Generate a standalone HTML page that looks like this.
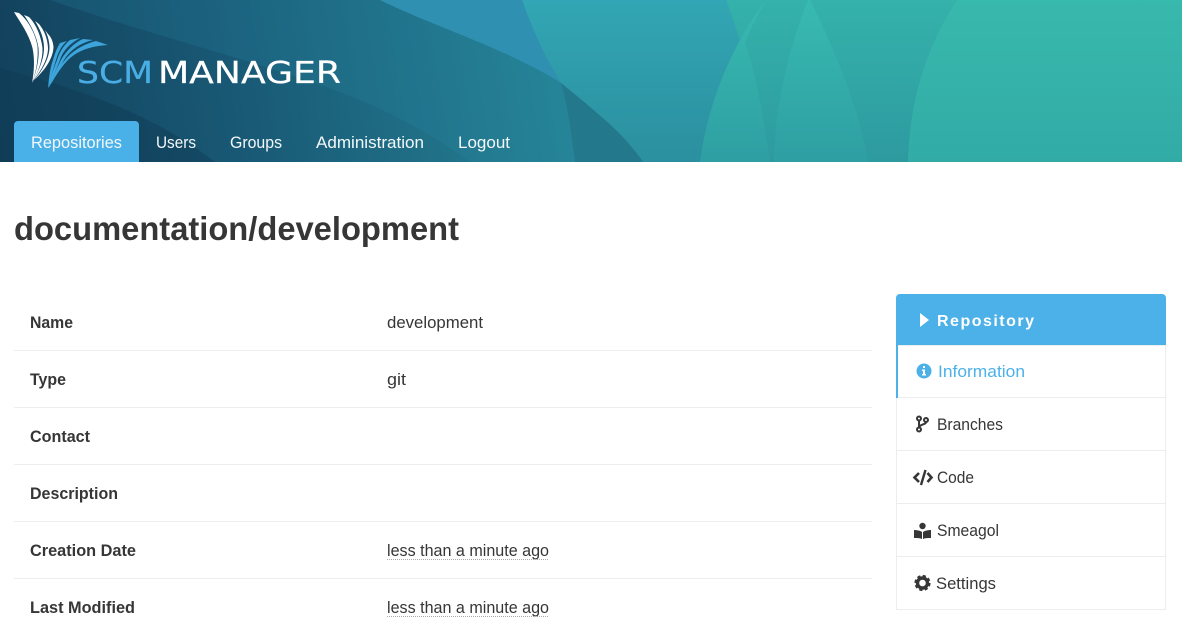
<!DOCTYPE html>
<html><head><meta charset="utf-8"><title>SCM Manager</title>
<style>
html,body{margin:0;padding:0;background:#fff;width:1182px;height:641px;overflow:hidden}
svg{display:block}
text{font-family:"Liberation Sans",sans-serif;font-size:17px;fill:#363636}
.b{font-weight:bold}
.n{fill:#f3f8fa}
</style></head><body>
<svg width="1182" height="641" viewBox="0 0 1182 641" xmlns="http://www.w3.org/2000/svg">
<defs>
<linearGradient id="g" gradientUnits="userSpaceOnUse" x1="0" y1="162" x2="1000" y2="0">
<stop offset="0" stop-color="#12405b"/><stop offset=".25" stop-color="#195a76"/><stop offset=".5" stop-color="#237a8e"/><stop offset=".7" stop-color="#2d9aa3"/><stop offset="1" stop-color="#36b5a8"/>
</linearGradient>
<linearGradient id="v1" x1="0" y1="0" x2="0" y2="1"><stop offset="0" stop-color="#38bab0"/><stop offset="1" stop-color="#2e9fa3"/></linearGradient>
<linearGradient id="v2" x1="0" y1="0" x2="0" y2="1"><stop offset="0" stop-color="#35b2ab"/><stop offset="1" stop-color="#2d9aa0"/></linearGradient>
<linearGradient id="v3" x1="0" y1="0" x2="0" y2="1"><stop offset="0" stop-color="#38b9ad"/><stop offset="1" stop-color="#32aba6"/></linearGradient>
<linearGradient id="v4" x1="0" y1="0" x2="0" y2="1"><stop offset="0" stop-color="#32a6b4"/><stop offset="1" stop-color="#2b8f9f"/></linearGradient>
</defs>
<rect width="1182" height="162" fill="url(#g)"/>
<path d="M0 68C80 90 150 112 215 162H0Z" fill="#103850" opacity=".4"/>
<path d="M50 0C150 35 260 62 340 92C400 115 440 140 470 162H575C572 140 568 105 561 83C510 50 430 25 380 0Z" fill="#2a8cab" opacity=".2"/>
<path d="M380 0H522C534 35 548 62 561 83C510 50 430 25 380 0Z" fill="#2f90b2"/>
<path d="M522 0H726C745 50 760 110 770 162H643C625 135 600 115 561 83C548 62 534 35 522 0Z" fill="url(#v4)"/>
<path d="M561 83C600 115 625 135 643 162H575C572 140 568 105 561 83Z" fill="#24788c"/>
<path d="M726 0H808C790 45 775 100 774 162H770C760 110 745 50 726 0Z" fill="url(#v2)"/>
<path d="M766 0C735 40 708 100 700 162H770C762 105 752 60 745 43C752 25 760 10 766 0Z" fill="url(#v1)"/>
<path d="M810 0H957C925 50 910 100 908 162H868C860 115 840 60 810 0Z" fill="url(#v2)"/>
<path d="M808 0H810C840 60 860 115 868 162H774C775 100 790 45 808 0Z" fill="url(#v1)"/>
<path d="M957 0H1182V162H908C910 100 925 50 957 0Z" fill="url(#v3)"/>

<!-- logo -->
<g fill="#fff">
<path d="M14 12L19 13C27 19 35 32 37.500 46C38.500 60 36 72 32 83C34 72 35 60 32.500 48C29 34 20 22 14 12Z"/>
<path d="M24 15L29 17C36 24 41 36 42.500 48C43 60 38 72 32.500 82C36 72 39.500 60 38.500 48C37 37 31 25 24 15Z"/>
<path d="M35 21L39 24C44 30 47.500 38 48 48C48 60 40 72 33 81C38 72 44 60 44 48C44 38 40 29 35 21Z"/>
<path d="M45 30L48 34C51 37 53 41 53.500 47C53 60 43 72 34 80C41 72 49 60 49.500 48C49.500 42 48 36 45 30Z"/>
</g>
<g fill="#3da5dc">
<path d="M60 43L67 41C61 46 58 53 56 60C53 70 50 80 48 88C49 78 50 68 53 60C55 53 57 48 60 43Z"/>
<path d="M70 40L80 38C71 43 63 50 60 60C56 70 52 80 48 88C50 78 54 68 57 60C60 51 64 45 70 40Z"/>
<path d="M83 39L93 40C80 43 70 50 64 60C58 70 53 80 48.500 88C52 78 57 68 61 60C66 51 74 43 83 39Z"/>
<path d="M96 41L108 45C90 46 77 51 68 60C60 68 54 79 48.500 88C53 77 58 68 65 60C72 51 84 44 96 41Z"/>
</g>
<text x="77" y="83" textLength="76" lengthAdjust="spacingAndGlyphs" style="font-family:'DejaVu Sans',sans-serif;font-size:30px;fill:#4aaee5;stroke:#4aaee5;stroke-width:.2">SCM</text>
<text x="158" y="83" textLength="183" lengthAdjust="spacingAndGlyphs" style="font-family:'DejaVu Sans',sans-serif;font-size:30px;fill:#fff;stroke:#fff;stroke-width:.25">MANAGER</text>

<!-- nav -->
<path d="M14 162V125a4 4 0 0 1 4-4H135a4 4 0 0 1 4 4V162Z" fill="#4ab0e8"/>
<text class="n" x="31" y="148" textLength="91" lengthAdjust="spacingAndGlyphs">Repositories</text>
<text class="n" x="156" y="148" textLength="40" lengthAdjust="spacingAndGlyphs">Users</text>
<text class="n" x="230" y="148" textLength="52" lengthAdjust="spacingAndGlyphs">Groups</text>
<text class="n" x="316" y="148" textLength="108" lengthAdjust="spacingAndGlyphs">Administration</text>
<text class="n" x="458" y="148" textLength="52" lengthAdjust="spacingAndGlyphs">Logout</text>

<!-- title -->
<text class="b" x="14" y="240" textLength="445" lengthAdjust="spacingAndGlyphs" style="font-size:33px">documentation/development</text>

<!-- table -->
<g fill="#ededed">
<rect x="14" y="350" width="858" height="1"/><rect x="14" y="407" width="858" height="1"/><rect x="14" y="464" width="858" height="1"/><rect x="14" y="521" width="858" height="1"/><rect x="14" y="578" width="858" height="1"/>
</g>
<text class="b" x="30" y="328" textLength="43" lengthAdjust="spacingAndGlyphs">Name</text>
<text class="b" x="30" y="385" textLength="36" lengthAdjust="spacingAndGlyphs">Type</text>
<text class="b" x="30" y="442" textLength="60" lengthAdjust="spacingAndGlyphs">Contact</text>
<text class="b" x="30" y="499" textLength="88" lengthAdjust="spacingAndGlyphs">Description</text>
<text class="b" x="30" y="556" textLength="106" lengthAdjust="spacingAndGlyphs">Creation Date</text>
<text class="b" x="30" y="613" textLength="105" lengthAdjust="spacingAndGlyphs">Last Modified</text>
<text x="387" y="328" textLength="96" lengthAdjust="spacingAndGlyphs">development</text>
<text x="387" y="385" textLength="19" lengthAdjust="spacingAndGlyphs">git</text>
<text x="387" y="556" textLength="162" lengthAdjust="spacingAndGlyphs">less than a minute ago</text>
<text x="387" y="613" textLength="162" lengthAdjust="spacingAndGlyphs">less than a minute ago</text>
<path d="M387 559.500H549M387 616.500H549" stroke="#aaa" stroke-width="1" stroke-dasharray="1 1"/>

<!-- sidebar -->
<rect x="896.500" y="345.500" width="269" height="264" fill="#fff" stroke="#ededed"/>
<path d="M896 345V298a4 4 0 0 1 4-4H1162a4 4 0 0 1 4 4V345Z" fill="#4cb1e8"/>
<path d="M920 313L929 320L920 327Z" fill="#fff"/>
<text class="b" x="937" y="326" textLength="97" lengthAdjust="spacing" style="font-size:16px;fill:#fff">Repository</text>
<rect x="896" y="345" width="2" height="53" fill="#4cb1e8"/>
<g fill="#ededed"><rect x="898" y="397" width="268" height="1"/><rect x="897" y="450" width="269" height="1"/><rect x="897" y="503" width="269" height="1"/><rect x="897" y="556" width="269" height="1"/></g>

<circle cx="924" cy="371" r="7.500" fill="#4cb1e8"/>
<path d="M923 366h2v2h-2ZM922 369.500h3v4.500h1v1.500h-4V374h1v-3h-1Z" fill="#fff"/>
<text x="938" y="377" textLength="87" lengthAdjust="spacingAndGlyphs" style="fill:#4cb1e8">Information</text>

<g fill="none" stroke="#363636" stroke-width="2">
<circle cx="919" cy="418.500" r="2"/><circle cx="919" cy="429.500" r="2"/><circle cx="926" cy="420" r="2"/>
<path d="M919 420.500V427.500M926 422C926 425 919 424 919 428"/>
</g>
<text x="937" y="430" textLength="66" lengthAdjust="spacingAndGlyphs">Branches</text>

<path d="M919 473L914.500 477.500L919 482M927.500 473L931.500 477.500L927.500 482" fill="none" stroke="#363636" stroke-width="2.600"/>
<path d="M925.500 470L921 485" fill="none" stroke="#363636" stroke-width="2.400"/>
<text x="937" y="483" textLength="37" lengthAdjust="spacingAndGlyphs">Code</text>

<circle cx="922.500" cy="526" r="3.200" fill="#363636"/>
<path d="M914 530C917 530 920 530.500 922 532V539C920 538 917 538 914 538ZM931 530C928 530 925 530.500 923 532V539C925 538 928 538 931 538Z" fill="#363636"/>
<text x="937" y="536" textLength="62" lengthAdjust="spacingAndGlyphs">Smeagol</text>

<circle cx="922.500" cy="583" r="5" fill="none" stroke="#363636" stroke-width="3.400"/>
<circle cx="922.500" cy="583" r="6.600" fill="none" stroke="#363636" stroke-width="3" stroke-dasharray="3 2.180"/>
<text x="936" y="589" textLength="60" lengthAdjust="spacingAndGlyphs">Settings</text>
</svg>
</body></html>
